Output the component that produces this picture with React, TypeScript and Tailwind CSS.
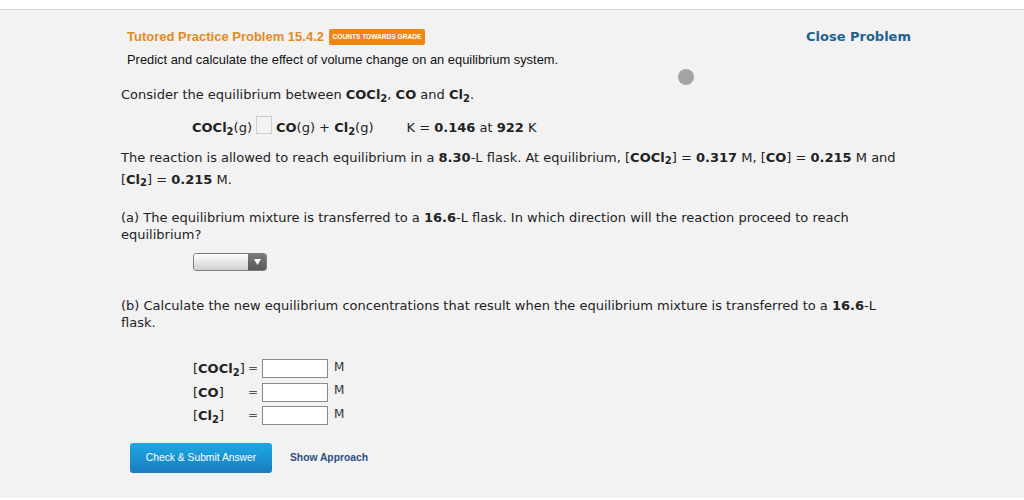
import React from 'react';

const verdana = { fontFamily: '"DejaVu Sans", Verdana, sans-serif' };
const arial = { fontFamily: '"Liberation Sans", Arial, sans-serif' };

function Chem({ children }: { children: React.ReactNode }) {
  return <b className="font-bold">{children}</b>;
}

function Sub({ children }: { children: React.ReactNode }) {
  return <sub className="text-[10px] font-bold">{children}</sub>;
}

function AnswerRow({ label }: { label: React.ReactNode }) {
  return (
    <div className="flex items-center h-[23.5px]">
      <span className="w-[55px] flex items-center">{label}</span>
      <span className="w-[14px] text-[12px] text-[#555]">=</span>
      <input className="w-[66px] h-[19px] bg-white border border-[#8a8a8a] outline-none" />
      <span className="ml-[6px] text-[12px] text-[#333] -mt-[3px]">M</span>
    </div>
  );
}

export default function App() {
  return (
    <div className="w-[1024px] h-[500px] bg-white overflow-hidden">
      <div className="h-[10px] border-b border-[#dcdcdc] bg-white" />
      <div className="relative h-[488px] bg-[#f2f2f2] text-[#222]">
        <div className="absolute left-[678px] top-[59px] w-[16px] h-[16px] rounded-full bg-[#a3a3a3]" />

        <div className="pt-[17px] pl-[127px] pr-[113px] flex items-center justify-between">
          <div className="flex items-center h-[18px]" style={arial}>
            <span className="text-[13px] font-bold text-[#e6891d]">Tutored Practice Problem 15.4.2</span>
            <span className="ml-[5px] bg-[#ee8712] text-white text-[6.6px] font-bold px-[3.5px] h-[16px] leading-[16px] rounded-[2px]">
              COUNTS TOWARDS GRADE
            </span>
          </div>
          <a className="text-[13px] font-bold text-[#21618f]" style={verdana}>Close Problem</a>
        </div>

        <p className="mt-[5px] ml-[127px] text-[12.9px] leading-[16px] text-[#111]" style={arial}>
          Predict and calculate the effect of volume change on an equilibrium system.
        </p>

        <div className="ml-[121px] w-[790px] text-[13px] leading-[17px]" style={verdana}>
          <p className="mt-[18.5px]">
            Consider the equilibrium between <Chem>COCl<Sub>2</Sub></Chem>, <Chem>CO</Chem> and <Chem>Cl<Sub>2</Sub></Chem>.
          </p>

          <div className="mt-[16px] ml-[71px] flex items-center h-[17px]">
            <span>
              <Chem>COCl<Sub>2</Sub></Chem>(g)
            </span>
            <span className="mx-[4px] w-[16px] h-[18px] border border-[#cfcfcf] -mt-[6px]" />
            <span>
              <Chem>CO</Chem>(g) + <Chem>Cl<Sub>2</Sub></Chem>(g)
            </span>
            <span className="ml-[33px]">
              K = <Chem>0.146</Chem> at <Chem>922</Chem> K
            </span>
          </div>

          <p className="mt-[10.5px] leading-[22px]">
            The reaction is allowed to reach equilibrium in a <Chem>8.30</Chem>-L flask. At equilibrium, [<Chem>COCl<Sub>2</Sub></Chem>] = <Chem>0.317</Chem> M, [<Chem>CO</Chem>] = <Chem>0.215</Chem> M and [<Chem>Cl<Sub>2</Sub></Chem>] = <Chem>0.215</Chem> M.
          </p>

          <p className="mt-[18.5px]">
            (a) The equilibrium mixture is transferred to a <Chem>16.6</Chem>-L flask. In which direction will the reaction proceed to reach equilibrium?
          </p>

          <div className="mt-[9.5px] ml-[72px] flex w-[74px] h-[18px] rounded-[3px] border border-[#7d7d7d] overflow-hidden">
            <div className="flex-1 bg-gradient-to-b from-white to-[#cfcfcf]" />
            <div className="w-[18px] bg-gradient-to-b from-[#7a7a7a] to-[#5a5a5a] flex items-center justify-center">
              <svg width="7" height="6" viewBox="0 0 7 6">
                <path d="M0 0 H7 L3.5 6 Z" fill="#fff" />
              </svg>
            </div>
          </div>

          <p className="mt-[26.5px]">
            (b) Calculate the new equilibrium concentrations that result when the equilibrium mixture is transferred to a <Chem>16.6</Chem>-L flask.
          </p>

          <div className="mt-[26px] ml-[72px]">
            <AnswerRow label={<span>[<Chem>COCl<Sub>2</Sub></Chem>]</span>} />
            <AnswerRow label={<span>[<Chem>CO</Chem>]</span>} />
            <AnswerRow label={<span>[<Chem>Cl<Sub>2</Sub></Chem>]</span>} />
          </div>
        </div>

        <div className="mt-[15px] ml-[130px] flex items-center" style={arial}>
          <button className="w-[142px] h-[30px] rounded-[3px] bg-gradient-to-b from-[#1da9e3] to-[#1a7cbf] text-white text-[10.3px]">
            Check &amp; Submit Answer
          </button>
          <a className="ml-[18px] text-[10.3px] font-bold text-[#2f4d86]">Show Approach</a>
        </div>
      </div>
    </div>
  );
}
